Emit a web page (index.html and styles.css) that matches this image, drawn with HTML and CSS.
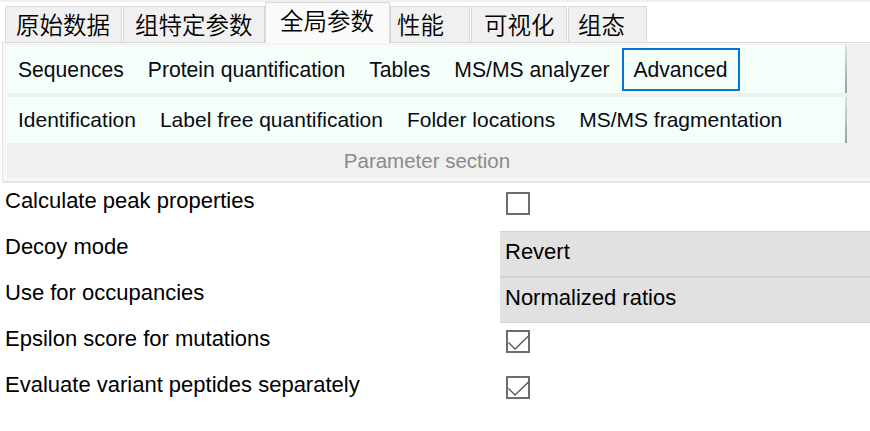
FILE: index.html
```html
<!DOCTYPE html>
<html lang="zh">
<head>
<meta charset="utf-8">
<title>Parameters</title>
<link rel="stylesheet" href="styles.css">
</head>
<body>
<div class="topline"></div>
<div class="tabstrip">
  <div class="tab t1">原始数据</div>
  <div class="tab t2">组特定参数</div>
  <div class="tab t3 sel">全局参数</div>
  <div class="tab t4">性能</div>
  <div class="tab t5">可视化</div>
  <div class="tab t6">组态</div>
</div>
<div class="tabpage">
  <div class="panel">
    <div class="col">
      <div class="row r1">
        <span class="link">Sequences</span>
        <span class="link">Protein quantification</span>
        <span class="link">Tables</span>
        <span class="link">MS/MS analyzer</span>
        <span class="link focus">Advanced</span>
      </div>
      <div class="row r2">
        <span class="link">Identification</span>
        <span class="link">Label free quantification</span>
        <span class="link">Folder locations</span>
        <span class="link">MS/MS fragmentation</span>
      </div>
      <div class="caption">Parameter section</div>
    </div>
  </div>
</div>
<div class="grid">
  <div class="label">Calculate peak properties</div>
  <div class="val">
    <svg class="cb" width="24" height="23" viewBox="0 0 24 23"><rect x="1" y="1" width="22" height="21" fill="#fff" stroke="#6e6e6e" stroke-width="2"/></svg>
  </div>
  <div class="label">Decoy mode</div>
  <div class="combo">Revert</div>
  <div class="label">Use for occupancies</div>
  <div class="combo">Normalized ratios</div>
  <div class="label">Epsilon score for mutations</div>
  <div class="val">
    <svg class="cb" width="24" height="23" viewBox="0 0 24 23"><rect x="1" y="1" width="22" height="21" fill="#fff" stroke="#6e6e6e" stroke-width="2"/><polyline points="2.5,12.5 9,19 23,5.5" fill="none" stroke="#575757" stroke-width="1.3"/></svg>
  </div>
  <div class="label">Evaluate variant peptides separately</div>
  <div class="val">
    <svg class="cb" width="24" height="23" viewBox="0 0 24 23"><rect x="1" y="1" width="22" height="21" fill="#fff" stroke="#6e6e6e" stroke-width="2"/><polyline points="2.5,12.5 9,19 23,5.5" fill="none" stroke="#575757" stroke-width="1.3"/></svg>
  </div>
</div>
</body>
</html>
```
FILE: styles.css
```css
html, body {
  margin: 0;
  padding: 0;
}
body {
  width: 870px;
  height: 431px;
  overflow: hidden;
  background: #ffffff;
  font-family: "Liberation Sans", Arial, sans-serif;
  color: #000;
}
.topline {
  height: 2px;
  background: #efefef;
}
.tabstrip {
  height: 40px;
  display: flex;
  align-items: flex-end;
  padding-left: 5px;
}
.tab {
  box-sizing: border-box;
  height: 36px;
  border: 1px solid #d9d9d9;
  border-bottom: none;
  background: #f0f0f0;
  font-family: "Noto Sans CJK SC", "Noto Sans", sans-serif;
  font-size: 23.5px;
  font-weight: 350;
  line-height: 35px;
  white-space: nowrap;
  color: #000;
}
.tab.sel {
  height: 41px;
  margin-bottom: -1px;
  padding-bottom: 5px;
  background: #fafafa;
  position: relative;
  z-index: 1;
}
.t1 { width: 117px; padding-left: 10px; margin-right: 1px; }
.t2 { width: 142px; padding-left: 11px; }
.t3 { width: 125px; padding-left: 14px; }
.t4 { width: 80px; padding-left: 6px; margin-right: 1px; }
.t5 { width: 96px; padding-left: 12px; margin-right: 1px; }
.t6 { width: 79px; padding-left: 9px; }

.tabpage {
  margin-left: 2px;
  border-top: 1px solid #dadada;
  border-left: 1px solid #e4e4e4;
  border-bottom: 2px solid #e6e6e6;
  padding: 1px 0 3px 4px;
  background: #f7f7f7;
}
.panel {
  height: 133px;
  padding-top: 1px;
  background: #f0f0f0;
}
.col {
  width: 840px;
}
.row {
  display: flex;
  align-items: flex-start;
  background: linear-gradient(to bottom, #dedede, #9c9c9c) right top / 2px 100% no-repeat, #f5fffa;
}
.r1 {
  height: 48px;
  box-sizing: border-box;
  padding-top: 3px;
}
.r2 {
  height: 46px;
  margin-top: 4px;
}
.link {
  padding: 0 13px 0 11px;
  font-size: 21px;
  line-height: 43px;
  white-space: nowrap;
  color: #0a0a14;
}
.r1 .link {
  font-size: 21.15px;
}
.r2 .link {
  line-height: 46px;
}
.link.focus {
  border: 2px solid #0078d7;
  padding: 0 11px 0 9px;
  line-height: 39px;
}
.caption {
  height: 35px;
  line-height: 35px;
  text-align: center;
  font-size: 20.5px;
  color: #8a8a8a;
}

.grid {
  margin-top: 2px;
  display: grid;
  grid-template-columns: 500px 1fr;
  grid-auto-rows: 46px;
}
.label {
  font-size: 22px;
  line-height: 25px;
  padding: 3px 0 0 5px;
  white-space: nowrap;
}
.val {
  padding: 7px 0 0 6px;
}
.cb {
  display: block;
}
.combo {
  box-sizing: border-box;
  background: #e1e1e1;
  border-top: 1px solid #d2d2d2;
  border-bottom: 1px solid #d2d2d2;
  padding-left: 5px;
  font-size: 22px;
  line-height: 40px;
  white-space: nowrap;
}
```
